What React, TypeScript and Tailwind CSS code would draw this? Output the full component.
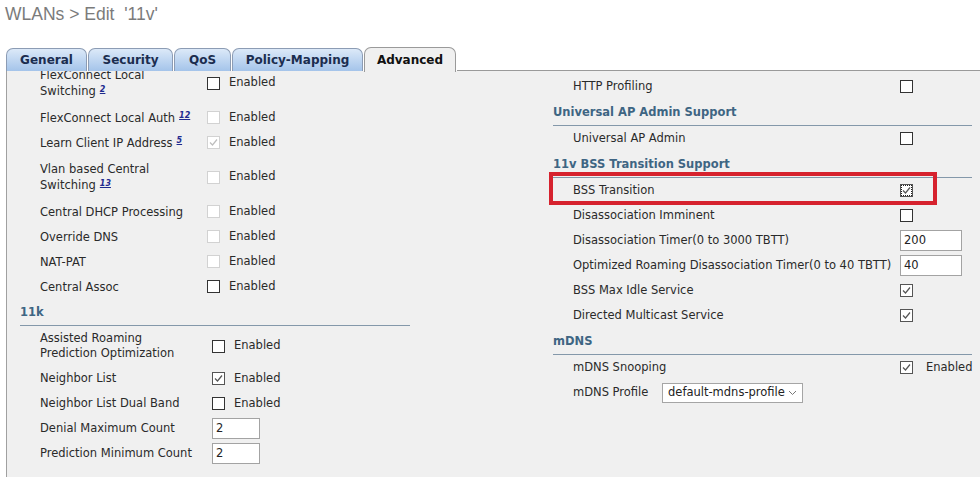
import React from 'react';

type Box = 'off' | 'on' | 'dis' | 'dischk' | 'focus';

const Check: React.FC<{ color: string }> = ({ color }) => (
  <svg width="11" height="11" viewBox="0 0 11 11" className="block">
    <path d="M2 5.5 L4.5 8 L9 2.5" fill="none" stroke={color} strokeWidth="1.2" />
  </svg>
);

const CheckBox: React.FC<{ kind: Box }> = ({ kind }) => {
  if (kind === 'off') return <span className="block w-[13px] h-[13px] border border-[#333] bg-white shrink-0" />;
  if (kind === 'dis') return <span className="block w-[13px] h-[13px] border border-[#d2d2d2] bg-white shrink-0" />;
  if (kind === 'dischk')
    return (
      <span className="block w-[13px] h-[13px] border border-[#d2d2d2] bg-white shrink-0">
        <Check color="#bdbdbd" />
      </span>
    );
  if (kind === 'focus')
    return (
      <span className="block w-[13px] h-[13px] border border-[#555] bg-white shrink-0 outline-1 outline-dotted outline-[#222] -outline-offset-2">
        <Check color="#555" />
      </span>
    );
  return (
    <span className="block w-[13px] h-[13px] border border-[#555] bg-white shrink-0">
      <Check color="#555" />
    </span>
  );
};

const Sup: React.FC<{ n?: string }> = ({ n }) =>
  n ? <sup className="ml-[4px] text-[8px] font-bold italic underline text-[#1e2b8f] top-[-0.4em]">{n}</sup> : null;

const TextBox: React.FC<{ value: string; w: string }> = ({ value, w }) => (
  <div className={`${w} h-[21px] border border-[#a3a3a3] bg-white px-[3px] flex items-center text-[#222]`}>{value}</div>
);

// section title with the rule under it
const Heading: React.FC<{ title: string; cls?: string }> = ({ title, cls }) => (
  <div className={`h-[27px] pt-[2px] flex items-center border-b border-[#8498aa] font-bold text-[#3e6583] ${cls ?? ''}`}>{title}</div>
);

const flexRows: { label: string[]; sup?: string; box: Box }[] = [
  { label: ['FlexConnect Local', 'Switching'], sup: '2', box: 'off' },
  { label: ['FlexConnect Local Auth'], sup: '12', box: 'dis' },
  { label: ['Learn Client IP Address'], sup: '5', box: 'dischk' },
  { label: ['Vlan based Central', 'Switching'], sup: '13', box: 'dis' },
  { label: ['Central DHCP Processing'], box: 'dis' },
  { label: ['Override DNS'], box: 'dis' },
  { label: ['NAT-PAT'], box: 'dis' },
  { label: ['Central Assoc'], box: 'off' },
];

const Tab: React.FC<{ name: string; w: string; active?: boolean }> = ({ name, w, active }) =>
  active ? (
    <div className={`${w} h-[25px] -mb-[1px] border border-b-0 border-[#9a9a9a] rounded-t-[7px] bg-[#f0f0f0] flex items-center justify-center font-bold text-[12px] text-[#111] z-10`}>
      {name}
    </div>
  ) : (
    <div className={`${w} h-[23px] border border-b-0 border-[#8c9cb4] rounded-t-[7px] bg-gradient-to-b from-[#dce9f8] to-[#a4c4ea] flex items-center justify-center font-bold text-[12px] text-[#1b2d4f]`}>
      {name}
    </div>
  );

const RightRow: React.FC<{ label: string; children?: React.ReactNode; extra?: React.ReactNode }> = ({ label, children, extra }) => (
  <div className="relative h-[25px] flex items-center pl-[20px]">
    <div className="w-[327px] shrink-0">{label}</div>
    {children}
    {extra}
  </div>
);

export default function App() {
  return (
    <div className="w-[980px] h-[477px] bg-white overflow-hidden font-['DejaVu_Sans',sans-serif] text-[11.5px] text-[#2a2a2a]">
      <div className="h-[46px] pl-[5px] pt-[4px] leading-[20px] text-[17.5px] text-[#7b7b7b] font-['Liberation_Sans',Arial,sans-serif] whitespace-pre">
        WLANs &gt; Edit  '11v'
      </div>

      {/* tabs */}
      <div className="h-[25px] flex items-end pl-[6px] gap-[1px]">
        <Tab name="General" w="w-[81px]" />
        <Tab name="Security" w="w-[85px]" />
        <Tab name="QoS" w="w-[57px]" />
        <Tab name="Policy-Mapping" w="w-[131px]" />
        <Tab name="Advanced" w="w-[92px]" active />
        <div className="flex-1 border-b border-[#9a9a9a]" />
      </div>

      {/* panel */}
      <div className="ml-[6px] h-[406px] border-l border-[#a0a0a0] bg-[#f0f0f0] flex overflow-hidden">
        <div className="w-[546px] shrink-0 -mt-[10px]">
          {flexRows.map((r, i) => (
            <div key={i} className={`flex items-center pl-[33px] ${r.label.length > 1 ? 'h-[44px]' : 'h-[25px]'}`}>
              <div className="w-[167px] shrink-0 leading-[16px]">
                {r.label.map((l, j) => (
                  <div key={j}>
                    {l}
                    {j === r.label.length - 1 && <Sup n={r.sup} />}
                  </div>
                ))}
              </div>
              <CheckBox kind={r.box} />
              <span className="ml-[9px]">Enabled</span>
            </div>
          ))}

          <Heading title="11k" cls="ml-[13px] w-[390px]" />

          <div className="h-[40px] flex items-center pl-[33px]">
            <div className="w-[172px] shrink-0 leading-[15px]">
              <div>Assisted Roaming</div>
              <div>Prediction Optimization</div>
            </div>
            <CheckBox kind="off" />
            <span className="ml-[9px]">Enabled</span>
          </div>
          <div className="h-[25px] flex items-center pl-[33px]">
            <div className="w-[172px] shrink-0">Neighbor List</div>
            <CheckBox kind="on" />
            <span className="ml-[9px]">Enabled</span>
          </div>
          <div className="h-[25px] flex items-center pl-[33px]">
            <div className="w-[172px] shrink-0">Neighbor List Dual Band</div>
            <CheckBox kind="off" />
            <span className="ml-[9px]">Enabled</span>
          </div>
          <div className="h-[25px] flex items-center pl-[33px]">
            <div className="w-[172px] shrink-0">Denial Maximum Count</div>
            <TextBox value="2" w="w-[48px]" />
          </div>
          <div className="h-[25px] flex items-center pl-[33px]">
            <div className="w-[172px] shrink-0">Prediction Minimum Count</div>
            <TextBox value="2" w="w-[48px]" />
          </div>
        </div>

        <div className="flex-1 pt-[3px] pr-[9px]">
          <RightRow label="HTTP Profiling">
            <CheckBox kind="off" />
          </RightRow>
          <Heading title="Universal AP Admin Support" />
          <RightRow label="Universal AP Admin">
            <CheckBox kind="off" />
          </RightRow>
          <Heading title="11v BSS Transition Support" />
          <RightRow
            label="BSS Transition"
            extra={<div className="absolute -left-[4px] -top-[6px] w-[388px] h-[33px] border-[4px] border-[#d6222e]" />}
          >
            <CheckBox kind="focus" />
          </RightRow>
          <RightRow label="Disassociation Imminent">
            <CheckBox kind="off" />
          </RightRow>
          <RightRow label="Disassociation Timer(0 to 3000 TBTT)">
            <TextBox value="200" w="w-[62px]" />
          </RightRow>
          <RightRow label="Optimized Roaming Disassociation Timer(0 to 40 TBTT)">
            <TextBox value="40" w="w-[62px]" />
          </RightRow>
          <RightRow label="BSS Max Idle Service">
            <CheckBox kind="on" />
          </RightRow>
          <RightRow label="Directed Multicast Service">
            <CheckBox kind="on" />
          </RightRow>
          <Heading title="mDNS" />
          <RightRow label="mDNS Snooping">
            <CheckBox kind="on" />
            <span className="ml-[13px]">Enabled</span>
          </RightRow>
          <div className="h-[25px] flex items-center pl-[20px]">
            <div className="w-[89px] shrink-0">mDNS Profile</div>
            <div className="w-[141px] h-[20px] border border-[#a5a5a5] bg-white flex items-center justify-between pl-[5px] pr-[5px] text-[#222]">
              <span>default-mdns-profile</span>
              <svg width="9" height="6" viewBox="0 0 9 6">
                <path d="M1 1 L4.5 4.5 L8 1" fill="none" stroke="#777" strokeWidth="1" />
              </svg>
            </div>
          </div>
        </div>
      </div>
    </div>
  );
}
